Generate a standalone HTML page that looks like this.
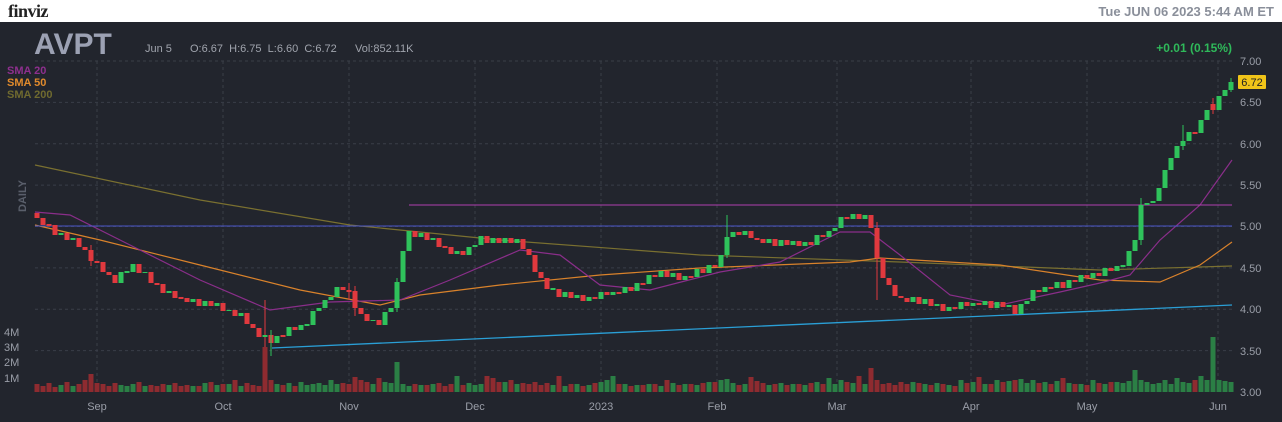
<!DOCTYPE html><html><head><meta charset="utf-8"><style>
body{margin:0;width:1282px;height:422px;overflow:hidden;background:#22252d;font-family:"Liberation Sans",sans-serif}
#hd{position:absolute;left:0;top:0;width:1282px;height:22px;background:#fff}
#logo{position:absolute;left:8px;top:1px;font:bold 18px "Liberation Serif",serif;color:#222;letter-spacing:-0.5px}
#dt{position:absolute;right:8px;top:4px;font:bold 13px "Liberation Sans",sans-serif;color:#8a8f9a}
svg{position:absolute;left:0;top:0}
</style></head><body>
<div id="hd"><div id="logo">finviz</div><div id="dt">Tue JUN 06 2023 5:44 AM ET</div></div>
<svg width="1282" height="422" font-family="Liberation Sans, sans-serif">
<rect x="0" y="22" width="1282" height="400" fill="#22252d"/>
<g stroke="#3a3e48" stroke-dasharray="3,3" stroke-width="1">
<path d="M97 61V392M223 61V392M349 61V392M475 61V392M601 61V392M717 61V392M837 61V392M971 61V392M1087 61V392M1218 61V392"/>
<path d="M35 61H1232M35 102.4H1232M35 143.8H1232M35 185.1H1232M35 226.5H1232M35 267.9H1232M35 309.3H1232M35 350.6H1232"/>
</g>
<g font-size="11" fill="#9a9ea8">
<text x="97" y="410" text-anchor="middle">Sep</text><text x="223" y="410" text-anchor="middle">Oct</text><text x="349" y="410" text-anchor="middle">Nov</text><text x="475" y="410" text-anchor="middle">Dec</text><text x="601" y="410" text-anchor="middle">2023</text><text x="717" y="410" text-anchor="middle">Feb</text><text x="837" y="410" text-anchor="middle">Mar</text><text x="971" y="410" text-anchor="middle">Apr</text><text x="1087" y="410" text-anchor="middle">May</text><text x="1218" y="410" text-anchor="middle">Jun</text>
<text x="1240" y="65">7.00</text><text x="1240" y="106">6.50</text><text x="1240" y="148">6.00</text><text x="1240" y="189">5.50</text><text x="1240" y="230">5.00</text><text x="1240" y="272">4.50</text><text x="1240" y="313">4.00</text><text x="1240" y="355">3.50</text><text x="1240" y="396">3.00</text>
<text x="4" y="382">1M</text><text x="4" y="366">2M</text><text x="4" y="351">3M</text><text x="4" y="336">4M</text>
</g>
<text x="34" y="54" font-size="30" font-weight="bold" fill="#9ca1b3">AVPT</text>
<text x="145" y="52" font-size="11" fill="#a0a4ad">Jun 5</text>
<text x="190" y="52" font-size="11" fill="#a0a4ad" xml:space="preserve">O:6.67  H:6.75  L:6.60  C:6.72</text>
<text x="355" y="52" font-size="11" fill="#a0a4ad">Vol:852.11K</text>
<text x="7" y="74" font-size="11" font-weight="bold" fill="#8e2f8e">SMA 20</text>
<text x="7" y="86" font-size="11" font-weight="bold" fill="#e08a2c">SMA 50</text>
<text x="7" y="98" font-size="11" font-weight="bold" fill="#6f6a2f">SMA 200</text>
<text x="26" y="212" font-size="11" font-weight="bold" fill="#5a5f6b" transform="rotate(-90 26 212)">DAILY</text>
<text x="1232" y="52" font-size="12" font-weight="bold" fill="#2fb95a" text-anchor="end">+0.01 (0.15%)</text>
<g fill="none">
<polyline points="35,165 200,200 350,225 500,240 700,255 900,262 1100,270 1232,266" stroke="#7a7030" stroke-width="1.2"/>
<polyline points="35,225 100,240 200,265 300,290 380,305 420,295 500,285 600,275 700,268 850,262 880,258 1000,265 1100,280 1160,282 1200,265 1232,242" stroke="#d9822b" stroke-width="1.2"/>
<polyline points="35,212 70,215 120,240 200,280 270,310 330,302 400,300 450,280 520,250 560,255 600,285 650,290 720,272 780,262 840,232 870,232 900,255 950,295 1000,305 1060,292 1100,283 1130,275 1160,240 1200,205 1232,160" stroke="#8a2e8a" stroke-width="1.2"/>
<path d="M409 205H1232" stroke="#b040b0"/>
<path d="M35 226H1232" stroke="#4a55c8"/>
<path d="M272 348L1232 305" stroke="#2a9fd6" stroke-width="1.3"/>
</g>
<path stroke="#e0393e" stroke-width="5" fill="none" d="M37 213V218M43 218V225M49 224V226M55 225V235M67 233V240M79 238V247M85 247V250M91 250V261M97 261V263M103 262V272M109 272V275M115 275V283M139 264V273M151 272V283M157 283V285M163 284V293M175 291V298M181 297V299M187 298V302M199 299V306M211 301V306M223 303V311M235 310V316M247 313V324M253 324V328M259 328V337M271 335V343M283 335V337M295 327V330M343 287V290M349 290V292M355 291V308M361 308V314M367 314V321M379 320V325M415 231V237M427 233V240M439 238V247M445 246V248M451 247V254M463 251V255M487 236V243M499 238V243M511 238V243M523 239V249M529 249V255M535 255V272M541 272V278M547 278V289M559 289V297M571 292V298M583 295V301M595 297V299M607 292V295M619 292V294M631 287V291M643 283V285M655 275V277M667 271V277M679 273V280M691 276V278M703 269V273M715 265V267M739 232V235M751 231V238M757 238V240M763 239V243M775 239V246M787 240V245M799 241V246M811 242V245M823 235V237M847 217V219M859 214V219M871 215V228M877 228V258M883 258V278M889 278V285M895 285V296M901 296V298M907 298V302M919 297V304M931 299V306M943 304V311M955 307V309M967 302V306M979 303V305M991 301V308M1003 302V307M1015 305V314M1039 290V292M1051 287V289M1063 282V288M1075 280V282M1087 275V278M1099 273V276M1111 268V271M1195 132V134M1213 104V110"/>
<path stroke="#e0393e" stroke-width="1" fill="none" d="M265 300V358M349 283V300M877 222V300M1213 98V114M355 286V316M91 245V266"/>
<path stroke="#2fc25b" stroke-width="5" fill="none" d="M61 233V235M73 238V240M121 272V283M127 271V273M133 264V272M145 272V273M169 291V293M193 299V302M205 301V306M217 303V306M229 310V311M241 313V316M265 335V337M277 336V343M289 327V336M301 325V330M307 324V326M313 311V325M319 308V311M325 300V308M331 297V300M337 287V297M373 320V321M385 312V325M391 308V312M397 282V308M403 251V282M409 231V251M421 233V237M433 238V240M457 251V254M469 247V255M475 245V247M481 236V245M493 238V243M505 238V243M517 239V243M553 288V290M565 292V297M577 295V298M589 297V301M601 292V299M613 292V295M625 287V293M637 283V291M649 275V284M661 271V277M673 273V277M685 276V280M697 269V277M709 265V273M721 255V267M727 237V255M733 232V237M745 231V235M769 239V243M781 240V246M793 241V245M805 242V246M817 235V245M829 231V237M835 228V231M841 217V228M853 214V219M865 215V219M913 297V302M925 299V304M937 304V306M949 307V311M961 302V309M973 303V306M985 301V305M997 302V308M1009 305V307M1021 304V314M1027 301V304M1033 290V301M1045 287V292M1057 282V288M1069 280V288M1081 275V282M1093 273V278M1105 268V276M1117 266V271M1123 265V267M1129 251V266M1135 240V251M1141 205V240M1147 203V205M1153 201V203M1159 188V201M1165 170V188M1171 158V170M1177 146V158M1183 141V146M1189 132V141M1201 120V133M1207 110V120M1219 96V110M1225 90V96M1231 82V90"/>
<path stroke="#2fc25b" stroke-width="1" fill="none" d="M271 330V356M727 215V258M1141 198V245M1183 125V150M1231 78V92M397 278V312"/>
<path stroke="#8e2b30" stroke-width="5" fill="none" d="M37 392v-8M43 392v-6M49 392v-9M55 392v-5M67 392v-10M79 392v-8M85 392v-12M91 392v-18M97 392v-9M103 392v-8M109 392v-6M115 392v-9M139 392v-10M151 392v-7M157 392v-6M163 392v-8M175 392v-9M181 392v-6M187 392v-7M199 392v-6M211 392v-10M223 392v-8M235 392v-12M247 392v-9M253 392v-7M259 392v-6M265 392v-45M271 392v-12M283 392v-7M295 392v-6M343 392v-9M349 392v-8M355 392v-15M361 392v-12M367 392v-10M379 392v-14M415 392v-8M427 392v-7M439 392v-9M445 392v-6M451 392v-8M463 392v-7M487 392v-16M493 392v-14M499 392v-10M511 392v-12M523 392v-9M529 392v-8M535 392v-10M541 392v-7M547 392v-9M559 392v-16M571 392v-8M583 392v-6M595 392v-9M607 392v-7M619 392v-8M631 392v-6M643 392v-7M655 392v-8M667 392v-12M679 392v-7M691 392v-8M703 392v-9M715 392v-10M739 392v-7M751 392v-15M757 392v-11M763 392v-9M775 392v-8M787 392v-7M799 392v-8M811 392v-9M823 392v-8M847 392v-10M859 392v-16M871 392v-24M877 392v-12M883 392v-8M889 392v-9M895 392v-7M901 392v-10M907 392v-8M919 392v-9M931 392v-7M943 392v-8M955 392v-6M967 392v-9M979 392v-15M991 392v-8M1003 392v-10M1015 392v-12M1039 392v-9M1051 392v-8M1063 392v-14M1075 392v-8M1087 392v-7M1099 392v-9M1111 392v-10M1195 392v-12M1213 392v-10"/>
<path stroke="#2b7f45" stroke-width="5" fill="none" d="M61 392v-7M73 392v-6M121 392v-7M127 392v-6M133 392v-8M145 392v-6M169 392v-7M193 392v-6M205 392v-9M217 392v-7M229 392v-8M241 392v-6M277 392v-8M289 392v-9M301 392v-10M307 392v-7M313 392v-8M319 392v-9M325 392v-7M331 392v-12M337 392v-8M373 392v-8M385 392v-10M391 392v-9M397 392v-30M403 392v-8M409 392v-6M421 392v-7M433 392v-8M457 392v-16M469 392v-9M475 392v-7M481 392v-8M505 392v-10M517 392v-8M553 392v-7M565 392v-6M577 392v-8M589 392v-7M601 392v-10M607 392v-12M613 392v-16M625 392v-8M637 392v-7M649 392v-8M661 392v-6M673 392v-9M685 392v-8M697 392v-7M709 392v-10M721 392v-12M727 392v-13M733 392v-9M745 392v-8M769 392v-7M781 392v-9M793 392v-8M805 392v-7M817 392v-10M829 392v-14M835 392v-8M841 392v-12M853 392v-9M865 392v-8M913 392v-10M925 392v-8M937 392v-9M949 392v-7M961 392v-12M973 392v-10M985 392v-8M997 392v-12M1009 392v-11M1021 392v-13M1027 392v-9M1033 392v-12M1045 392v-10M1057 392v-11M1069 392v-9M1081 392v-8M1093 392v-12M1105 392v-8M1117 392v-10M1123 392v-9M1129 392v-11M1135 392v-22M1141 392v-12M1147 392v-10M1153 392v-8M1159 392v-9M1165 392v-12M1171 392v-8M1177 392v-14M1183 392v-10M1189 392v-9M1201 392v-16M1207 392v-12M1213 392v-55M1219 392v-12M1225 392v-11M1231 392v-10"/>
<rect x="1238" y="75" width="28" height="14" fill="#f0c419" rx="1"/>
<text x="1252" y="86" font-size="11" text-anchor="middle" fill="#222">6.72</text>
</svg>
</body></html>
